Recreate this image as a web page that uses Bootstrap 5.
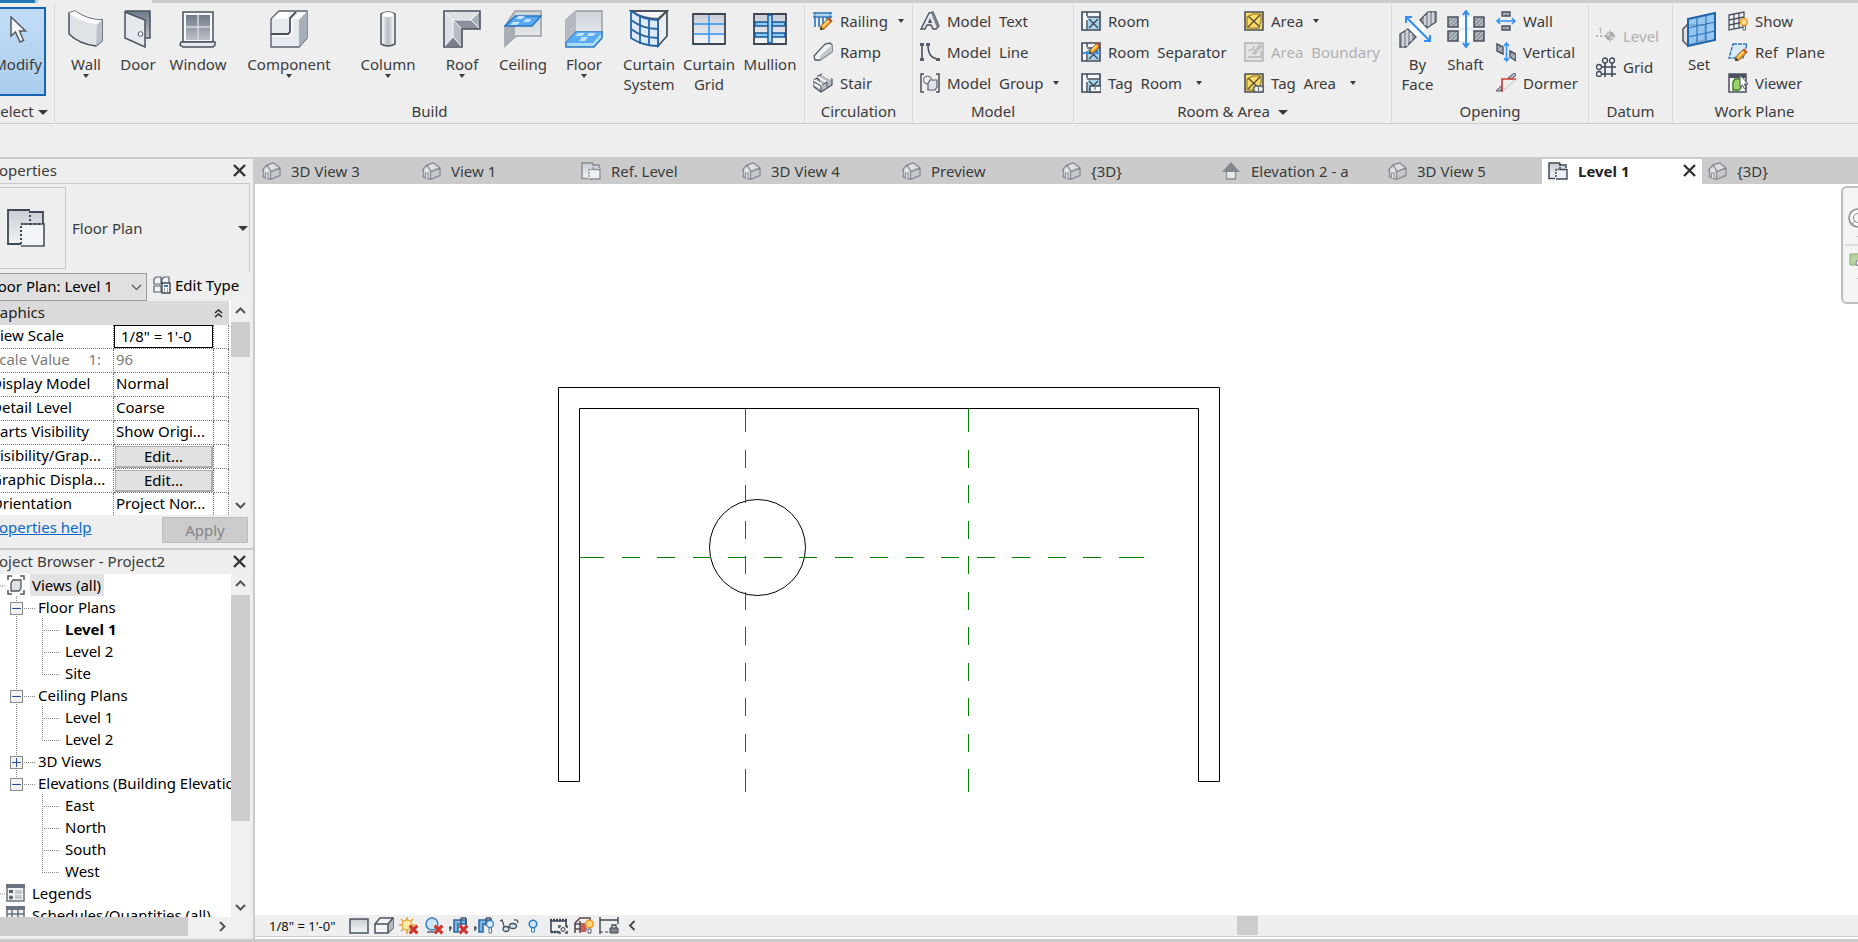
<!DOCTYPE html>
<html lang="en">
<head>
<meta charset="utf-8">
<meta name="viewport" content="width=device-width, initial-scale=1">
<title>Project2 - Floor Plan: Level 1</title>
<link href="https://cdn.jsdelivr.net/npm/bootstrap@5.3.0/dist/css/bootstrap.min.css" rel="stylesheet">
<style>
  :root { --chrome: #eeeeee; --edge: #cbcbcb; --ink: #3b3b3b; --dots: #8a8a8a; --bleed: 20px; }
  body { font-family: "Noto Sans", "Open Sans", sans-serif; font-size: 15px; line-height: 20px; color: var(--ink); background: var(--chrome); }
  button { font: inherit; color: inherit; background: none; border: 0; padding: 0; }
  svg { display: block; flex: none; }
  .bleed-start { margin-left: calc(-1 * var(--bleed)); }

  /* ribbon */
  .strip-top { height: 3px; background: var(--edge); }
  .strip-top i { display: block; background: #1f78b8; width: 55px; }
  .strip-top b { display: block; background: var(--chrome); width: 114px; margin-left: 3px; }
  .ribbon { height: 121px; border-bottom: 1px solid var(--edge); }
  .group { display: flex; flex-direction: column; flex: none; border-right: 1px solid #d8d8d8; margin: 1px 0; }
  .group:last-child { border-right: 0; }
  .group-body { flex: 1; display: flex; min-height: 0; }
  .group-title { height: 22px; line-height: 22px; text-align: center; white-space: nowrap; }
  .big { display: flex; flex-direction: column; align-items: center; justify-content: flex-start; padding-top: 6px; line-height: 20px; white-space: nowrap; }
  .big svg.ico { margin-bottom: 6px; }
  .small-col { display: flex; flex-direction: column; padding-top: 1px; }
  .cmd { height: 31px; display: flex; align-items: center; gap: 7px; white-space: pre; }
  .cmd:disabled { color: #b0b0b0; }
  .tri { width: 0; height: 0; border: 3px solid transparent; border-top: 4px solid currentColor; border-bottom: 0; display: inline-block; flex: none; }
  .tri-lg { border-width: 5px 5px 0 5px; vertical-align: middle; }
  .cmd .tri { margin-left: 3px; }
  .g-select { width: 75px; }
  .g-build { width: 750px; }
  .g-build .group-body { display: grid; grid-template-columns: 52px 52px 68px 114px 84px 64px 58px 64px 66px 54px 68px; padding-left: 5px; }
  .g-circ { width: 108px; } .g-model { width: 161px; } .g-room { width: 318px; }
  .g-open { width: 197px; } .g-datum { width: 84px; } .g-work { width: 163px; }
  .modify { width: 57px; height: 89px; margin: 3px 0 0 9px; padding-top: 7px; border: 2px solid #1665b5; background: linear-gradient(#c2dcf5, #abceee); }
  .big.modify svg.ico { margin-bottom: 10px; }
  .options { height: 33px; flex: none; }

  /* docked palettes */
  .dock { width: 275px; flex: none; padding-right: 3px; border-right: 2px solid var(--edge); border-top: 2px solid var(--edge); }
  .pal-head { height: 24px; padding: 0 4px 2px 4px; flex: none; white-space: nowrap; }
  .type-pick { height: 89px; border: 1px solid #c8c8c8; border-width: 1px 1px 0 0; flex: none; padding-right: 1px; gap: 6px; }
  .thumb { width: 86px; height: 82px; border: 1px solid #c8c8c8; padding-left: 25px; }
  .inst { height: 29px; flex: none; gap: 6px; }
  .inst select { width: 167px; height: 28px; appearance: none; border: 1px solid #9a9a9a; background: #e0e0e0; color: #000; padding: 0 0 2px 5px; border-radius: 0; }
  .inst .chev { position: absolute; right: 5px; top: 11px; pointer-events: none; }
  .inst button { gap: 4px; padding-bottom: 4px; }
  .grid-wrap { height: 214px; flex: none; background: #fff; color: #000; overflow: hidden; }
  .props { width: 249px; table-layout: fixed; border-collapse: separate; border-spacing: 0; white-space: nowrap; line-height: 20px; }
  .props td, .props th { font-weight: 400; height: 24px; padding: 0 0 3px 2px; border-right: 1px dotted #777; border-bottom: 1px dotted #777; overflow: hidden; vertical-align: middle; }
  .props tbody th { padding: 0 8px 3px 11px; }
  .props thead th { background: #dadada; border: 0; color: #222; padding: 0 0 2px 3px; }
  .props .dim { color: #7b7b7b; }
  .props td.flush { padding: 0; }
  .props input { width: 100%; height: 23px; display: block; border: 1px solid #000; padding: 0 20px 2px 6px; outline: 0; border-radius: 0; }
  .props td button { display: block; width: 98px; height: 22px; margin-left: 1px; line-height: 18px; background: #e1e1e1; border: 1px solid #adadad; border-bottom-width: 2px; border-right-width: 2px; }
  .vbar { width: 19px; flex: none; background: #f0f0f0; display: flex; flex-direction: column; align-items: center; padding: 6px 0; }
  .vbar .knob, .hbar .knob { background: #cdcdcd; }
  .vbar .knob { width: 19px; }
  .under { height: 33px; flex: none; padding: 2px 2px 0 4px; }
  .under a { color: #0a66c8; line-height: 20px; }
  .under button { width: 86px; height: 26px; background: #cccccc; border: 1px solid #bdbdbd; color: #858585; }
  .sep { height: 2px; background: var(--edge); flex: none; margin-right: -3px; }
  .tree { background: #fff; color: #000; overflow: hidden; white-space: nowrap; flex: 1; min-width: 0; }
  .tree ul { list-style: none; margin: 0; padding: 0; }
  .trow { display: flex; align-items: center; height: 22px; }
  .root-name { background: #e2e2e2; padding: 1px 3px 1px 2px; }
  .root-ico { margin: 0 6px 0 20px; }
  .trunk, .branch, .node { align-self: stretch; flex: none; --v: repeating-linear-gradient(#8a8a8a 0 1px, transparent 1px 2px); --h: repeating-linear-gradient(90deg, #8a8a8a 0 1px, transparent 1px 2px); background-repeat: no-repeat; }
  .trunk { width: 52px; background-image: var(--v); background-size: 1px 100%; background-position: 36px 0; }
  .trunk.off { background-image: none; }
  .branch { width: 33px; background-image: var(--v), var(--h); background-size: 1px 100%, 18px 1px; background-position: 10px 0, 10px 12px; }
  .branch.end { background-size: 1px 12px, 18px 1px; }
  .node { width: 58px; background-image: var(--v), var(--h); background-size: 1px 100%, 11px 1px; background-position: 36px 0, 44px 12px; padding: 6px 0 0 30px; }
  .node.end { background-size: 1px 12px, 11px 1px; }
  .node button { width: 13px; height: 13px; display: block; border: 1px solid #8b8b8b; background: #f2f2f2; }
  .hbar { height: 19px; flex: none; background: #f0f0f0; margin-bottom: 3px; }
  .hbar .knob { width: 188px; margin-left: 20px; }

  /* drawing area */
  .tabs { height: 27px; background: var(--edge); padding: 2px 0 0 1px; flex: none; overflow: hidden; }
  .tab { width: 160px; flex: none; display: flex; align-items: center; gap: 10px; padding: 0 0 2px 5px; white-space: nowrap; }
  .tab.wide { width: 166px; }
  .tab.on { background: #fff; font-weight: 700; color: #222; padding: 0 6px 2px; }
  .canvas { background: #fff; min-height: 0; overflow: hidden; }
  .navbox { position: absolute; right: -20px; top: 2px; width: 37px; height: 118px; border: 2px solid #bdbdbd; border-radius: 6px; background: #f4f4f4; display: flex; flex-direction: column; align-items: center; }
  .navbox .tri { color: #777; }
  .statusbar { height: 21px; margin-left: 2px; background: #efefef; flex: none; }
  .scale { font-size: 13px; color: #111; width: 84px; }
  .statusbar .tools { gap: 5px; }
  .hthumb { width: 21px; height: 19px; background: #cdcdcd; }
  .runoff { height: 3px; border-top: 1px solid var(--edge); background: #fff; flex: none; }
  .strip-end { height: 3px; background: var(--edge); flex: none; }
</style>
</head>
<body class="vh-100 d-flex flex-column overflow-hidden">

<svg width="0" height="0" class="position-absolute" aria-hidden="true">
  <defs>
    <linearGradient id="gl" x1="0" y1="0" x2="0" y2="1"><stop offset="0" stop-color="#c9cdd4"/><stop offset="1" stop-color="#f4f5f7"/></linearGradient>
    <linearGradient id="gd" x1="0" y1="0" x2="0" y2="1"><stop offset="0" stop-color="#6f7988"/><stop offset="1" stop-color="#bcc0c8"/></linearGradient>
    <linearGradient id="gr" x1="0" y1="0" x2="1" y2="0"><stop offset="0" stop-color="#fff"/><stop offset=".5" stop-color="#b5bac2"/><stop offset="1" stop-color="#fff"/></linearGradient>
    <linearGradient id="ge" x1="0" y1="0" x2="0" y2="1"><stop offset="0" stop-color="#cdd2d9"/><stop offset="1" stop-color="#eceef1"/></linearGradient>
    <pattern id="ht" width="3" height="3" patternUnits="userSpaceOnUse" patternTransform="rotate(45)"><rect width="3" height="3" fill="#b4b9c0"/><path d="M0 0V3" stroke="#4a525e"/></pattern>
    <symbol id="house" viewBox="0 0 20 18"><path d="M9 8.500 18.500 6V13.500L9.500 17.500 2.500 15V8Z" fill="#c6c8cd"/><path d="M2.500 8 6 3.500 9.500 9V17.500L2.500 15Z" fill="#e2e3e6"/><path d="M6 3 12.500 .8 19 6 9.500 9Z" fill="#dcdee1"/><path d="M1 8.500 6 3 12.500 .8 19 6M6 3 10 9.500 19 6V13.500L9.500 17.300 2.500 15V8M9.500 9V17" fill="none" stroke="#8c8f96" stroke-width="1.400" stroke-linejoin="round"/><path d="M4.500 15.500V11H7V16.500" fill="#f2f2f2" stroke="#8c8f96" stroke-width="1.200"/></symbol>
    <symbol id="plan" viewBox="0 0 20 18"><path d="M1 1H12V4H18V17H8V16H1Z" fill="url(#gl)"/><path d="M12 1H1V16.500H7M12 1V3H18V6" fill="none" stroke="currentColor" stroke-width="1.500"/><path d="M8 17V7.500H19V17Z" fill="#eef0f3"/><path d="M14 7.500H19V17H8" fill="none" stroke="currentColor" stroke-width="1.400"/><path d="M12 2V7.500H8V16M12 7.500H15" fill="none" stroke="currentColor" stroke-width="1.500" stroke-dasharray="2 1"/></symbol>
    <symbol id="pencil" viewBox="0 0 12 12"><path d="M0 12 1 8 8 1 11 4 4 11Z" fill="#f5a623" stroke="#7a4a12" stroke-width=".8"/><path d="M2.500 8.500 9 2" stroke="#ffdf8e" stroke-width="1.200"/><path d="M7 2 8.500 .5 11.500 3.500 10 5Z" fill="#c9562b"/><path d="M0 12 .8 9 3 11.200Z" fill="#333"/></symbol>
    <symbol id="redx" viewBox="0 0 10 10"><path d="M1.500 1.500 8.500 8.500M8.500 1.500 1.500 8.500" stroke="#d0342c" stroke-width="2.800"/></symbol>
    <symbol id="roomi" viewBox="0 0 20 20"><path d="M1 1H19V19H1Z" fill="#f4f6f8" stroke="#3e4856" stroke-width="1.600"/><path d="M7 7H18V18H7Z" fill="#a9d3e8"/><path d="M6 1V5M6 9V19M6 6H19" stroke="#3e4856" stroke-width="1.400"/><path d="M8 8 17 17M17 8 8 17" stroke="#3e4856" stroke-width="1.400"/></symbol>
    <symbol id="areai" viewBox="0 0 20 20"><path d="M1 1H19V19H1Z" fill="#fbd965" stroke="#4a4f58" stroke-width="1.600"/><path d="M4 5 16 16M16 4 4 16" stroke="#4d4730" stroke-width="1.200"/><path d="M3 6 9 3H17V9L15 17H3Z" fill="none" stroke="#7d6c2c"/></symbol>
    <symbol id="up" viewBox="0 0 11 7"><path d="M1 6 5.500 1.500 10 6" fill="none" stroke="#555" stroke-width="2"/></symbol>
    <symbol id="down" viewBox="0 0 11 7"><path d="M1 1 5.500 5.500 10 1" fill="none" stroke="#555" stroke-width="2"/></symbol>
    <symbol id="cross" viewBox="0 0 13 13"><path d="M1 1 12 12M12 1 1 12" stroke="#333" stroke-width="2.400" fill="none"/></symbol>
    <symbol id="pipe" viewBox="0 0 20 16"><path d="M5 15V3H17V7H9V15Z" fill="#7db4e0" stroke="#2b6ca8" stroke-width="1.600"/><path d="M0 11H3M1 9V14M12 1V9M17 1V8M12 1H17" fill="none" stroke="#4b5563" stroke-width="1.500"/></symbol>
  </defs>
</svg>

<header class="flex-shrink-0">
  <div class="strip-top d-flex bleed-start"><i></i><b></b></div>
  <div class="ribbon d-flex bleed-start">

    <section class="group g-select">
      <div class="group-body">
        <button class="big modify"><svg class="ico" width="20" height="28" viewBox="0 0 20 28"><path d="M3 1V20L7.500 16 12 26 15.500 24.500 11.500 15H17.500Z" fill="#f7f8fa" stroke="#555b66" stroke-width="1.500"/></svg>Modify</button>
      </div>
      <div class="group-title text-start ps-2 ms-1">Select <span class="tri tri-lg"></span></div>
    </section>

    <section class="group g-build">
      <div class="group-body">
        <button class="big"><svg class="ico" width="38" height="38" viewBox="0 0 38 38"><path d="M2 3 8 1Q20 10 35 10V31L29 36Q12 34 2 24Z" fill="#dfe3e8" stroke="#4b525e" stroke-width="1.500"/><path d="M2 3 8 1Q20 10 35 10L30 14Q14 13 2 3Z" fill="#fbfcfd"/><path d="M30 15 35 10V31L29 36Z" fill="#bcc2ca"/></svg>Wall<span class="tri"></span></button>
        <button class="big"><svg class="ico" width="30" height="38" viewBox="0 0 30 38"><path d="M2 1H27V28H22" fill="url(#gd)" stroke="#4b525e" stroke-width="1.500"/><path d="M2 2 22 10V37L2 28Z" fill="#e5e8ec" stroke="#4b525e" stroke-width="1.500"/><circle cx="17.500" cy="24" r="2.300" fill="#fff" stroke="#4b525e"/></svg>Door</button>
        <button class="big"><svg class="ico" width="38" height="38" viewBox="0 0 38 38"><path d="M4 2H34V32H4Z" fill="#f7f8fa" stroke="#4b525e" stroke-width="1.500"/><path d="M7 5H31V30H7Z" fill="url(#gd)"/><path d="M19 5V30M7 17H31" stroke="#d5d8dd" stroke-width="1.500"/><path d="M2 32H36V35L34 37H4L1 35Z" fill="#e5e8ec" stroke="#4b525e" stroke-width="1.500"/></svg>Window</button>
        <button class="big"><svg class="ico" width="38" height="38" viewBox="0 0 38 38"><path d="M1 9 9 1H37V28L29 37H1Z" fill="#e6e9ed" stroke="#5b626d" stroke-width="1.400"/><path d="M29 10 37 1V28L29 37Z" fill="#a8aeb7"/><path d="M2 9 9 2H23L16 9ZM22 9 30 2H36L29 9Z" fill="#fff"/><path d="M1 24H18L20 22V8L26 2" fill="none" stroke="#4b525e" stroke-width="1.800"/><path d="M3 26H20L22 23V10" fill="none" stroke="#fff" stroke-width="1.500"/></svg>Component<span class="tri"></span></button>
        <button class="big"><svg class="ico" width="18" height="38" viewBox="0 0 18 38"><path d="M2 4Q9 0 16 4V34Q9 38 2 34Z" fill="url(#gr)" stroke="#4b525e" stroke-width="1.500"/><ellipse cx="9" cy="4.500" rx="6" ry="2.500" fill="#fff"/></svg>Column<span class="tri"></span></button>
        <button class="big"><svg class="ico" width="38" height="38" viewBox="0 0 38 38"><path d="M1 1H37V19H19V37H1Z" fill="#dde0e5"/><path d="M37 2V18L28 10Z" fill="#a9afb8"/><path d="M10 10H28L37 19H19V19Z" fill="#8b929d"/><path d="M10 10 19 19V37L10 27Z" fill="#b7bcc4"/><path d="M2 36 10 27 18 36Z" fill="#767e8a"/><path d="M1 1 19 19M10 10H28L37 1M28 10 37 19M10 10V27L1 37M10 27 19 37" fill="none" stroke="#f7f8fa"/><path d="M1 1H37V19H19V37H1Z" fill="none" stroke="#4b525e" stroke-width="1.600"/></svg>Roof<span class="tri"></span></button>
        <button class="big"><svg class="ico" width="38" height="38" viewBox="0 0 38 38"><path d="M11 1H37V26H12L1 36V16Z" fill="url(#ge)" stroke="#9a9da2" stroke-width="1.500"/><path d="M1 16 11 16V26L1 36Z" fill="#a9aeb6"/><path d="M11 6H37L28 16H1Z" fill="#58abf2" stroke="#2676c2" stroke-width="1.500"/><path d="M14 6H21L18 9H12ZM22 9H28L25 12H19ZM9 12H16L13 15H6Z" fill="#c3e2ff"/></svg>Ceiling</button>
        <button class="big"><svg class="ico" width="38" height="38" viewBox="0 0 38 38"><path d="M11 1H37V24L28 33H1V10Z" fill="url(#ge)" stroke="#9a9da2" stroke-width="1.500"/><path d="M1 10 11 1V23L1 33Z" fill="#b5bac2"/><path d="M11 22H37V28L29 37H1V33Z" fill="#a8dcf7" stroke="#2676c2" stroke-width="1.500"/><path d="M11 22H37L28 33H1Z" fill="#58abf2"/><path d="M13 23H20L17 26H10ZM24 23H31L28 26H21ZM17 27H23L20 31H14Z" fill="#c3e2ff"/></svg>Floor<span class="tri"></span></button>
        <button class="big"><svg class="ico" width="40" height="38" viewBox="0 0 40 38"><path d="M2 1 38 1 29 9Q14 9 2 1Z" fill="#f5f6f8" stroke="#4b525e" stroke-width="1.800"/><path d="M38 1V26L29 36V10Z" fill="#eceef1" stroke="#4b525e" stroke-width="1.800"/><path d="M2 1Q14 10 29 10V36Q14 36 2 28ZM2 10Q14 19 29 19M2 19Q14 28 29 28M11 6V34M20 9V36" fill="#dceaf7" stroke="#2464a6" stroke-width="1.800"/></svg>Curtain<br>System</button>
        <button class="big"><svg class="ico" width="38" height="38" viewBox="0 0 38 38"><path d="M3 4H35V34H3Z" fill="url(#gl)" stroke="#3f4652" stroke-width="1.800"/><path d="M4 14H34M4 24H34M19 5V33" stroke="#2f93f5" stroke-width="1.500"/></svg>Curtain<br>Grid</button>
        <button class="big"><svg class="ico" width="38" height="38" viewBox="0 0 38 38"><path d="M3 4H35V34H3Z" fill="url(#gl)" stroke="#3f4652" stroke-width="1.800"/><path d="M4 12H34V16H4ZM4 23H34V27H4Z" fill="#8cc9f3" stroke="#16579a" stroke-width="1.500"/><path d="M17 5H21V33H17Z" fill="#a9dafa" stroke="#16579a" stroke-width="1.500"/></svg>Mullion</button>
      </div>
      <div class="group-title">Build</div>
    </section>

    <section class="group g-circ">
      <div class="group-body"><div class="small-col ps-2">
        <button class="cmd"><svg width="20" height="20" viewBox="0 0 20 20"><path d="M0 2H19M0 6H19M2 2V16M6 6V16M10 6V16M14 6V14M17 2V10" stroke="#2872b8" stroke-width="1.600"/><path d="M0 4H19" stroke="#9cc8ee" stroke-width="1.500"/><use href="#pencil" x="7" y="6" width="13" height="13"/></svg>Railing<span class="tri"></span></button>
        <button class="cmd"><svg width="20" height="20" viewBox="0 0 20 20"><path d="M1 14 12 2 17 1 19 3V10L7 18H2Z" fill="#f1f2f4" stroke="#555c67" stroke-width="1.300"/><path d="M19 3 7 14V18L19 10Z" fill="#c2c7ce"/></svg>Ramp</button>
        <button class="cmd"><svg width="20" height="20" viewBox="0 0 20 20"><path d="M1 7 4 5 6 7 5 3 9 1 19 6V12L8 19 1 14Z" fill="#b7bcc4" stroke="#4b525e" stroke-width="1.200"/><path d="M1 7 9 12M5 4 13 9M9 1 18 6M1 11 8 15" stroke="#fff" stroke-width="1.800"/><path d="M2 9 8 13V18M9 12 14 9V14" fill="none" stroke="#4b525e"/></svg>Stair</button>
      </div></div>
      <div class="group-title">Circulation</div>
    </section>

    <section class="group g-model">
      <div class="group-body"><div class="small-col" style="padding-left:7px">
        <button class="cmd"><svg width="20" height="20" viewBox="0 0 20 20"><path d="M1 18 9 2 13 1 19 15 16 18H13L11 14H7L5 18Z" fill="#e7e9ed" stroke="#4b525e" stroke-width="1.400"/><path d="M8 12 10 7 12 12Z" fill="#4b525e"/><path d="M11 2 17 17 19 15 13 1Z" fill="#7d8590"/></svg>Model  Text</button>
        <button class="cmd"><svg width="20" height="20" viewBox="0 0 20 20"><path d="M2 3V17M8 3Q8 16 18 17" fill="none" stroke="#4b525e" stroke-width="1.600"/><path d="M0 1H4V4H0ZM0 16H4V19H0ZM6 1H10V4H6ZM16 16H20V19H16Z" fill="#59616d"/></svg>Model  Line</button>
        <button class="cmd"><svg width="20" height="20" viewBox="0 0 20 20"><path d="M4 1H1V19H4M16 1H19V19H16" fill="none" stroke="#4b525e" stroke-width="1.500"/><circle cx="7.500" cy="7" r="4" fill="#eee" stroke="#59616d"/><path d="M8 10 10 7H17V14L15 17H8Z" fill="#dfe2e6" stroke="#59616d" stroke-width="1.200"/></svg>Model  Group<span class="tri"></span></button>
      </div></div>
      <div class="group-title">Model</div>
    </section>

    <section class="group g-room">
      <div class="group-body">
        <div class="small-col" style="padding-left:7px;width:170px">
          <button class="cmd"><svg width="20" height="20"><use href="#roomi"/></svg>Room</button>
          <button class="cmd"><svg width="20" height="20" viewBox="0 0 20 20"><use href="#roomi"/><path d="M2 11H19" stroke="#3b93e6" stroke-width="2"/><use href="#pencil" x="8" y="0" width="12" height="12"/></svg>Room  Separator</button>
          <button class="cmd"><svg width="20" height="20" viewBox="0 0 20 20"><use href="#roomi"/><path d="M9 13H20V19H9Z" fill="#fff" stroke="#3e4856" stroke-width="1.500"/><path d="M14 14V17" stroke="#3e4856"/></svg>Tag  Room <span class="tri"></span></button>
        </div>
        <div class="small-col">
          <button class="cmd"><svg width="20" height="20"><use href="#areai"/></svg>Area<span class="tri"></span></button>
          <button class="cmd" disabled><svg width="20" height="20" viewBox="0 0 20 20"><path d="M1 1H19V19H1Z" fill="#e4e4e4" stroke="#b4b4b4" stroke-width="1.500"/><path d="M4 9 9 7 10 4M4 15H17V9M9 11 16 3 17 5 11 12Z" fill="none" stroke="#b4b4b4" stroke-width="1.300"/></svg>Area  Boundary</button>
          <button class="cmd"><svg width="20" height="20" viewBox="0 0 20 20"><use href="#areai"/><rect x="9.500" y="13" width="10" height="6" rx="3" fill="#eee" stroke="#59616d" stroke-width="1.500"/><path d="M14.500 14V18" stroke="#59616d"/></svg>Tag  Area <span class="tri"></span></button>
        </div>
      </div>
      <div class="group-title">Room &amp; Area <span class="tri tri-lg ms-1"></span></div>
    </section>

    <section class="group g-open">
      <div class="group-body">
        <button class="big" style="width:51px"><svg class="ico" width="38" height="38" viewBox="0 0 38 38"><path d="M10 18 20 10 28 18 18 27Z" fill="#fff"/><path d="M1 24 9 19 17 27 7 37H1ZM21 10 29 2H37V12L28 18Z" fill="#9aa0a9" stroke="#4b525e" stroke-width="1.300"/><path d="M4 23V37M8 20V36M12 23V31M26 6V15M30 2V16M34 2V13" stroke="#e2e4e8" stroke-width="1.500"/><path d="M8 8 30 30M7 13V7H13M31 25V31H25" fill="none" stroke="#2f8ff2" stroke-width="2"/></svg>By<br>Face</button>
        <button class="big" style="width:45px"><svg class="ico" width="38" height="38" viewBox="0 0 38 38"><path d="M12 7H26V17H12ZM12 21H26V31H12Z" fill="#fff"/><path d="M1 7H11V17H1ZM27 7H37V17H27ZM1 21H11V31H1ZM27 21H37V31H27Z" fill="url(#ht)" stroke="#4b525e" stroke-width="1.500"/><path d="M19 3V35M16 5 19 1 22 5M16 33 19 37 22 33" fill="none" stroke="#2f8ff2" stroke-width="2"/></svg>Shaft</button>
        <div class="small-col ps-2">
          <button class="cmd"><svg width="20" height="20" viewBox="0 0 20 20"><path d="M6 1H14V5H6ZM6 15H14V19H6Z" fill="url(#ht)" stroke="#4b525e" stroke-width="1.400"/><path d="M1 10H19M4 7 1 10 4 13M16 7 19 10 16 13" fill="none" stroke="#2f8ff2" stroke-width="1.500"/></svg>Wall</button>
          <button class="cmd"><svg width="20" height="20" viewBox="0 0 20 20"><path d="M1 2 7 5V12L1 9ZM14 9 20 12V19L14 15Z" fill="url(#ht)" stroke="#4b525e" stroke-width="1.400"/><path d="M10.500 1V19M8 4 10.500 1 13 4M8 16 10.500 19 13 16" fill="none" stroke="#2f8ff2" stroke-width="1.500"/></svg>Vertical</button>
          <button class="cmd"><svg width="20" height="20" viewBox="0 0 20 20"><path d="M0 18 6 12V18ZM12 5 18 0H20V2L16 6Z" fill="url(#ht)" stroke="#59616d"/><path d="M8 17 19 7" stroke="#b9bec5"/><path d="M6 19V6H20" fill="none" stroke="#d33a2c" stroke-width="1.600"/></svg>Dormer</button>
        </div>
      </div>
      <div class="group-title">Opening</div>
    </section>

    <section class="group g-datum">
      <div class="group-body"><div class="small-col pt-3" style="padding-left:7px">
        <button class="cmd" disabled><svg width="20" height="20" viewBox="0 0 20 20"><path d="M0 10H10" stroke="#b4b4b4" stroke-width="2" stroke-dasharray="2 2"/><circle cx="14" cy="10" r="4" fill="#d9d9d9" stroke="#b4b4b4"/><path d="M14 10V6A4 4 0 0 1 18 10ZM14 10V14A4 4 0 0 1 10 10Z" fill="#a8a8a8"/><path d="M14 4V16M8 10H20M3 3 4.500 2V7" fill="none" stroke="#b4b4b4"/></svg>Level</button>
        <button class="cmd"><svg width="20" height="20" viewBox="0 0 20 20"><path d="M9 6V20M16 6V20M5 10H20M5 17H20" stroke="#3e4856" stroke-width="1.600"/><g fill="#eee" stroke="#3e4856" stroke-width="1.300"><circle cx="9" cy="3.500" r="2.500"/><circle cx="16" cy="3.500" r="2.500"/><circle cx="3" cy="10" r="2.500"/><circle cx="3" cy="17" r="2.500"/></g></svg>Grid</button>
      </div></div>
      <div class="group-title">Datum</div>
    </section>

    <section class="group g-work">
      <div class="group-body">
        <button class="big" style="width:52px"><svg class="ico" width="36" height="38" viewBox="0 0 36 38"><path d="M2 19 6 15H24V30L6 35 2 31Z" fill="#dfe2e6" stroke="#4b525e" stroke-width="1.500"/><path d="M7 9 34 3V30L7 36Z" fill="#7fbdf0" fill-opacity=".8" stroke="#1c63ab" stroke-width="2"/><path d="M16 7V34M25 5V32M7 18 34 12M7 27 34 21" stroke="#2c74bb" stroke-width="1.200"/></svg>Set</button>
        <div class="small-col" style="padding-left:3px">
          <button class="cmd"><svg width="20" height="20" viewBox="0 0 20 20"><path d="M1 4 16 1V16L1 19ZM6 3V18M11 2V17M1 9 16 6M1 14 16 11" fill="#f3f4f6" stroke="#4b525e" stroke-width="1.300"/><circle cx="16" cy="11" r="3.500" fill="#ffe08a" stroke="#f29a1f" stroke-width="1.500"/><path d="M15 15H17.500V19H15Z" fill="#fff" stroke="#59616d"/></svg>Show</button>
          <button class="cmd"><svg width="20" height="20" viewBox="0 0 20 20"><path d="M5 2H19L15 16H1Z" fill="#d7eafa" stroke="#2c74bb" stroke-width="1.400" stroke-dasharray="4 1"/><use href="#pencil" x="7" y="6" width="13" height="13"/></svg>Ref  Plane</button>
          <button class="cmd"><svg width="20" height="20" viewBox="0 0 20 20"><path d="M1 1H18V19H1Z" fill="#f3f4f6" stroke="#4b525e" stroke-width="1.500"/><path d="M1 1H18V5H1Z" fill="#4b525e"/><path d="M5 9 7 6H13V15L11 17H5Z" fill="#9bd46a" stroke="#3c7d2a" stroke-width="1.400"/><path d="M12 2V14L14.500 12 16.500 16 18 15 16.500 11H20Z" fill="#fff" stroke="#4b525e"/></svg>Viewer</button>
        </div>
      </div>
      <div class="group-title">Work Plane</div>
    </section>
  </div>
  <div class="options"></div>
</header>

<main class="flex-grow-1 d-flex" style="min-height:0">
  <aside class="dock bleed-start d-flex flex-column">
    <div class="pal-head d-flex align-items-center"><span>Properties</span><button class="ms-auto" aria-label="Close properties"><svg width="13" height="13"><use href="#cross"/></svg></button></div>
    <div class="type-pick d-flex align-items-center">
      <div class="thumb d-flex align-items-center"><svg width="40" height="40" viewBox="0 0 40 40"><path d="M2 2H24V5H37V16H38V38H15V36H2Z" fill="url(#gl)"/><path d="M24 2H2V36H15M24 4H37V16" fill="none" stroke="#3e4856" stroke-width="1.800"/><path d="M15 16H38V38H15" fill="#f3f4f6" stroke="#4b525e" stroke-width="1.600"/><path d="M24 3V16H15V38M24 16H36" fill="none" stroke="#3e4856" stroke-width="2" stroke-dasharray="2 2"/></svg></div>
      <span class="flex-grow-1">Floor Plan</span><span class="tri tri-lg"></span>
    </div>
    <div class="inst d-flex align-items-center text-black">
      <div class="position-relative"><select aria-label="View"><option>Floor Plan: Level 1</option></select><svg class="chev" width="11" height="7" viewBox="0 0 11 7"><path d="M1 1 5.500 5.500 10 1" fill="none" stroke="#555" stroke-width="1.200"/></svg></div>
      <button class="d-flex align-items-center text-nowrap"><svg width="18" height="18" viewBox="0 0 18 18"><path d="M1 3 3 1H8V8H1ZM9 3 11 1H16V8H9ZM1 10H8V16H1Z" fill="#f3f4f6" stroke="#59616d" stroke-width="1.200"/><path d="M9 7H17V17H9Z" fill="#fff" stroke="#3e4856" stroke-width="1.400"/><path d="M11 9H15V11H11Z" fill="#2c74bb"/><path d="M11 13H12M14 13H15M11 15H12M14 15H15" stroke="#3e4856"/></svg>Edit Type</button>
    </div>
    <div class="grid-wrap d-flex">
      <table class="props">
        <colgroup><col style="width:134px"><col style="width:100px"><col style="width:15px"></colgroup>
        <thead><tr><th colspan="2">Graphics</th><th class="p-0"><svg class="ms-n1" width="9" height="9" viewBox="0 0 9 9"><path d="M1 4 4.500 1 8 4M1 8 4.500 5 8 8" fill="none" stroke="#222" stroke-width="1.500"/></svg></th></tr></thead>
        <tbody>
          <tr><th scope="row"><label for="vs">View Scale</label></th><td class="flush"><input id="vs" value="1/8&quot; = 1'-0&quot;"></td><td></td></tr>
          <tr class="dim"><th scope="row"><span class="d-flex justify-content-between pe-1"><span>Scale Value</span><span>1:</span></span></th><td>96</td><td></td></tr>
          <tr><th scope="row">Display Model</th><td>Normal</td><td></td></tr>
          <tr><th scope="row">Detail Level</th><td>Coarse</td><td></td></tr>
          <tr><th scope="row">Parts Visibility</th><td>Show Origi...</td><td></td></tr>
          <tr><th scope="row">Visibility/Grap...</th><td class="flush"><button>Edit...</button></td><td></td></tr>
          <tr><th scope="row">Graphic Displa...</th><td class="flush"><button>Edit...</button></td><td></td></tr>
          <tr><th scope="row">Orientation</th><td>Project Nor...</td><td></td></tr>
        </tbody>
      </table>
      <div class="vbar ms-auto"><svg width="11" height="7"><use href="#up"/></svg><div class="knob" style="height:35px;margin-top:8px"></div><svg class="mt-auto" width="11" height="7"><use href="#down"/></svg></div>
    </div>
    <div class="under d-flex justify-content-between"><a href="#help">Properties help</a><button disabled>Apply</button></div>
    <div class="sep"></div>
    <div class="pal-head d-flex align-items-center"><span>Project Browser - Project2</span><button class="ms-auto" aria-label="Close project browser"><svg width="13" height="13"><use href="#cross"/></svg></button></div>
    <div class="d-flex flex-grow-1" style="min-height:0">
      <div class="tree">
        <ul>
          <li class="trow"><svg style="margin:0 4px 0 20px" width="26" height="20" viewBox="0 0 26 20"><path d="M0 11H6" stroke="#8a8a8a" stroke-dasharray="1 1"/><path d="M8 5V1H12M20 1H24V5M24 15V19H20M12 19H8V15" fill="none" stroke="#555" stroke-width="1.500"/><path d="M11 8 13 5H21V13L19 16H11Z" fill="#dfe2e6" stroke="#555" stroke-width="1.300"/></svg><span class="root-name">Views (all)</span></li>
          <li class="trow"><span class="node"><button aria-label="Collapse"><svg width="11" height="11"><path d="M1 5.500H10" stroke="#2b4f9e" stroke-width="1"/></svg></button></span>Floor Plans</li>
          <li class="trow fw-bold"><span class="trunk"></span><span class="branch"></span>Level 1</li>
          <li class="trow"><span class="trunk"></span><span class="branch"></span>Level 2</li>
          <li class="trow"><span class="trunk"></span><span class="branch end"></span>Site</li>
          <li class="trow"><span class="node"><button aria-label="Collapse"><svg width="11" height="11"><path d="M1 5.500H10" stroke="#2b4f9e"/></svg></button></span>Ceiling Plans</li>
          <li class="trow"><span class="trunk"></span><span class="branch"></span>Level 1</li>
          <li class="trow"><span class="trunk"></span><span class="branch end"></span>Level 2</li>
          <li class="trow"><span class="node"><button aria-label="Expand"><svg width="11" height="11"><path d="M1 5.500H10M5.500 1V10" stroke="#2b4f9e"/></svg></button></span>3D Views</li>
          <li class="trow"><span class="node end"><button aria-label="Collapse"><svg width="11" height="11"><path d="M1 5.500H10" stroke="#2b4f9e"/></svg></button></span>Elevations (Building Elevation)</li>
          <li class="trow"><span class="trunk off"></span><span class="branch"></span>East</li>
          <li class="trow"><span class="trunk off"></span><span class="branch"></span>North</li>
          <li class="trow"><span class="trunk off"></span><span class="branch"></span>South</li>
          <li class="trow"><span class="trunk off"></span><span class="branch end"></span>West</li>
          <li class="trow"><svg class="root-ico" width="26" height="20" viewBox="0 0 26 20"><path d="M0 11H6" stroke="#8a8a8a" stroke-dasharray="1 1"/><path d="M7 2H24V18H7Z" fill="#eef0f2" stroke="#6b7280" stroke-width="1.500"/><path d="M6 1H25V5H6Z" fill="#6b7280"/><path d="M9 7H13V10H9Z" fill="#59616d"/><circle cx="11" cy="14.500" r="2" fill="#59616d"/><path d="M15 8H22M15 10H22M15 13H22M15 15H22" stroke="#9aa0a8"/></svg>Legends</li>
          <li class="trow"><svg class="root-ico" width="26" height="20" viewBox="0 0 26 20"><path d="M7 2H24V18H7ZM7 9H24M12 5V18M18 5V18" fill="#eef0f2" stroke="#6b7280" stroke-width="1.500"/><path d="M6 1H25V5H6Z" fill="#6b7280"/></svg>Schedules/Quantities (all)</li>
        </ul>
      </div>
      <div class="vbar"><svg width="11" height="7"><use href="#up"/></svg><div class="knob" style="height:226px;margin-top:8px"></div><svg class="mt-auto" width="11" height="7"><use href="#down"/></svg></div>
    </div>
    <div class="hbar d-flex align-items-stretch"><div class="knob"></div><svg class="ms-auto me-4 align-self-center" width="7" height="11" viewBox="0 0 7 11"><path d="M1 1 5.500 5.500 1 10" fill="none" stroke="#555" stroke-width="2"/></svg></div>
  </aside>

  <section class="flex-grow-1 d-flex flex-column" style="min-width:0">
    <nav class="tabs d-flex">
      <button class="tab"><svg width="20" height="18"><use href="#house"/></svg>3D View 3</button>
      <button class="tab"><svg width="20" height="18"><use href="#house"/></svg>View 1</button>
      <button class="tab"><svg width="20" height="18" style="color:#8d9096"><use href="#plan"/></svg>Ref. Level</button>
      <button class="tab"><svg width="20" height="18"><use href="#house"/></svg>3D View 4</button>
      <button class="tab"><svg width="20" height="18"><use href="#house"/></svg>Preview</button>
      <button class="tab"><svg width="20" height="18"><use href="#house"/></svg>{3D}</button>
      <button class="tab wide"><svg width="20" height="18" viewBox="0 0 20 18"><path d="M5.500 8H14.500V17H5.500Z" fill="#e8e8e8" stroke="#8b8e93" stroke-width="1.300"/><path d="M1 10 10 0 19 10Z" fill="#85888d"/></svg>Elevation 2 - a</button>
      <button class="tab"><svg width="20" height="18"><use href="#house"/></svg>3D View 5</button>
      <button class="tab on"><svg width="20" height="18" style="color:#3e4856"><use href="#plan"/></svg>Level 1<svg class="ms-auto" width="13" height="13"><use href="#cross"/></svg></button>
      <button class="tab"><svg width="20" height="18"><use href="#house"/></svg>{3D}</button>
    </nav>
    <div class="canvas flex-grow-1 position-relative">
      <svg width="100%" height="100%" role="img" aria-label="Floor plan of Level 1">
        <g transform="translate(.5 .5)" fill="none" stroke="#000">
          <path d="M303 203H964V597H943V224H324V597H303Z"/>
          <circle cx="502" cy="363" r="48"/>
          <path stroke="#008000" shape-rendering="crispEdges" stroke-dasharray="18 18 18 17" d="M490 224v5M490 229V602M490 602v5M713 224v5M713 229V602M713 602v5M324 373h6M330 373H881M881 373h7"/>
        </g>
      </svg>
      <div class="navbox">
        <svg style="margin-top:20px" width="24" height="20" viewBox="0 0 24 20"><circle cx="10" cy="10" r="9" fill="#f7f7f7" stroke="#8b8b8b" stroke-width="1.500"/><circle cx="10" cy="10" r="4.500" fill="none" stroke="#8b8b8b"/><path d="M4 16 7 13" stroke="#8b8b8b"/></svg>
        <span class="tri mt-2"></span>
        <svg class="mt-1" width="29" height="34" viewBox="0 0 29 34"><path d="M0 1H29" stroke="#c4c4c4"/><path d="M5 10H20V21H5Z" fill="#b9d3a0" stroke="#86ab6b"/><circle cx="14" cy="19" r="3" fill="#fff" stroke="#777"/></svg>
        <span class="tri"></span>
      </div>
    </div>
    <div class="statusbar d-flex align-items-center">
      <span class="scale ms-2 ps-1">1/8" = 1'-0"</span>
      <div class="tools d-flex align-items-center">
        <svg width="20" height="18" viewBox="0 0 20 18"><path d="M1 2H19V16H1Z" fill="url(#gl)" stroke="#4b525e" stroke-width="1.500"/></svg>
        <svg width="20" height="18" viewBox="0 0 20 18"><path d="M1 7 6 1H19V11L14 16H1Z" fill="#f3f4f6" stroke="#4b525e" stroke-width="1.500"/><path d="M14 7 19 1V11L14 16Z" fill="#b7bcc4"/><path d="M1 7H14V16M14 7 19 1" fill="none" stroke="#4b525e" stroke-width="1.500"/></svg>
        <svg width="20" height="18" viewBox="0 0 20 18"><path d="M8 0V17M0 8H16M2 2 14 14M14 2 2 14" stroke="#e2a22c" stroke-width="1.500"/><circle cx="8" cy="8" r="5" fill="#ffeaa3" stroke="#d9982a"/><use href="#redx" x="9" y="7" width="11" height="11"/></svg>
        <svg width="20" height="18" viewBox="0 0 20 18"><circle cx="8" cy="7" r="6" fill="#cfe6f7" stroke="#3f7fb8" stroke-width="1.500"/><path d="M3 15H10" stroke="#7d8590" stroke-width="2"/><use href="#redx" x="9" y="7" width="11" height="11"/></svg>
        <svg width="20" height="18" viewBox="0 0 20 18"><use href="#pipe" width="20" height="16"/><use href="#redx" x="9" y="7" width="11" height="11"/></svg>
        <svg width="20" height="18" viewBox="0 0 20 18"><use href="#pipe" width="20" height="16"/><circle cx="16" cy="7" r="3.500" fill="#d9efff" stroke="#3f7fb8" stroke-width="1.300"/><path d="M15 11H17.500V16H15Z" fill="#fff" stroke="#3f7fb8"/></svg>
        <svg width="20" height="18" viewBox="0 0 20 18"><path d="M1 4 3 3 5 9M19 6Q19 2 15 3M9 11 11 9" fill="none" stroke="#4b525e" stroke-width="1.300"/><ellipse cx="7" cy="12" rx="3" ry="2.500" fill="#d5e7f5" stroke="#4b525e" stroke-width="1.300"/><ellipse cx="14" cy="9" rx="3.500" ry="2.500" fill="#d5e7f5" stroke="#4b525e" stroke-width="1.300"/></svg>
        <svg width="20" height="18" viewBox="0 0 20 18"><circle cx="9" cy="7" r="3.800" fill="#cfe6f7" stroke="#2f7fc4" stroke-width="1.500"/><path d="M7.500 11H10.500V15H7.500Z" fill="#fff" stroke="#2f7fc4"/></svg>
        <svg width="20" height="18" viewBox="0 0 20 18"><path d="M2 4H17V8M8 15H2V4" fill="#f3f4f6" stroke="#3e4856" stroke-width="1.600"/><path d="M1 3H18M2 15H9" stroke="#3e4856" stroke-width="2.500" stroke-dasharray="2 1"/><path d="M10 11V9H12M16 9H18V11M18 14V16H16M12 16H10V14" fill="none" stroke="#3e4856" stroke-width="1.600"/><circle cx="14" cy="12.500" r="2" fill="#ddd" stroke="#3e4856"/></svg>
        <svg width="20" height="18" viewBox="0 0 20 18"><path d="M1 6 6 1H16V5M1 6V16M6 4V16M1 7H13M1 12H13" fill="none" stroke="#5a4750" stroke-width="1.600"/><path d="M7 7H12V15H7Z" fill="#d55b4c"/><circle cx="15.500" cy="7" r="3.800" fill="#ffd978" stroke="#ee9a28" stroke-width="1.500"/><path d="M14 12H17V16H14Z" fill="#fff" stroke="#59616d"/></svg>
        <svg width="20" height="18" viewBox="0 0 20 18"><path d="M1 0V17M19 0V7M1 3H19" stroke="#3e4856" stroke-width="1.400" fill="none"/><path d="M1 15H10" stroke="#3e4856" stroke-dasharray="3 2"/><path d="M11 11H19V16H11Z" fill="#7d8590" stroke="#3e4856"/><path d="M13 11V8H17V11" fill="none" stroke="#3e4856" stroke-width="1.300"/></svg>
        <svg class="ms-1" width="8" height="11" viewBox="0 0 8 11"><path d="M6.500 1 2 5.500 6.500 10" fill="none" stroke="#444" stroke-width="1.800"/></svg>
      </div>
      <div class="flex-grow-1 d-flex justify-content-center"><div class="hthumb"></div></div>
    </div>
    <div class="runoff"></div>
  </section>
</main>
<div class="strip-end"></div>
<script src="https://cdn.jsdelivr.net/npm/bootstrap@5.3.0/dist/js/bootstrap.bundle.min.js"></script>
</body>
</html>
